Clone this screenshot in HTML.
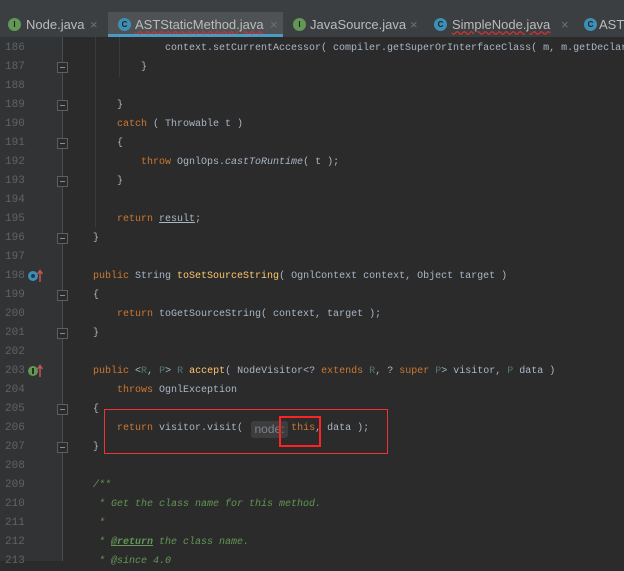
<!DOCTYPE html><html><head><style>
body{margin:0;width:624px;height:561px;overflow:hidden;background:#2b2b2b;font-family:"Liberation Mono",monospace;position:relative}
.top{position:absolute;left:0;top:0;width:624px;height:12px;background:#3c3f41}
.tabs{position:absolute;left:0;top:12px;width:624px;height:25px;background:#3c3f41}
.tab{position:absolute;top:0;height:25px;font:13px "Liberation Sans",sans-serif;color:#bbbbbb;line-height:25px;white-space:nowrap;overflow:hidden}
.tab .ic{position:absolute;top:6px;width:13px;height:13px;border-radius:50%;font:bold 8px "Liberation Sans";color:#222;text-align:center;line-height:13px}
.tab .x{color:#6f7274;font-size:13px;position:absolute}
.act{background:#4e5254;border-bottom:3px solid #4a9ac4;height:22px}
.gut{position:absolute;left:0;top:37px;width:62px;height:524px;background:#313335}
.ln{position:absolute;left:5px;width:20px;font-size:11px;color:#606366;height:19px;line-height:19px}
.code{position:absolute;left:93px;font-size:10px;color:#a9b7c6;white-space:pre;height:19px;line-height:19px}
.k{color:#cc7832}.f{color:#ffc66d}.c{color:#629755;font-style:italic}.i{font-style:italic}.tp{color:#507874}
.fold{position:absolute;left:57px;width:9px;height:9px;border:1px solid #5c5f61;background:#2b2b2b}
.fold:after{content:"";position:absolute;left:2px;top:4px;width:5px;height:1px;background:#8a8d8f}
.g{position:absolute;width:1px;background:#3b3b3b}
</style></head><body>
<div class="top"></div>
<div class="tabs">
<div class="tab" style="left:0;width:105px"><span class="ic" style="left:8px;background:#629755">I</span><span style="position:absolute;left:26px">Node.java</span><span class="x" style="left:90px">×</span></div>
<div class="tab act" style="left:108px;width:175px"><span class="ic" style="left:10px;background:#3d8fb5">C</span><span style="position:absolute;left:27px;text-decoration:underline wavy #c33">ASTStaticMethod.java</span><span class="x" style="left:162px">×</span></div>
<div class="tab" style="left:283px;width:142px"><span class="ic" style="left:10px;background:#629755">I</span><span style="position:absolute;left:27px">JavaSource.java</span><span class="x" style="left:127px">×</span></div>
<div class="tab" style="left:425px;width:150px"><span class="ic" style="left:9px;background:#3d8fb5">C</span><span style="position:absolute;left:27px;text-decoration:underline wavy #c33">SimpleNode.java</span><span class="x" style="left:136px">×</span></div>
<div class="tab" style="left:575px;width:60px"><span class="ic" style="left:9px;background:#3d8fb5">C</span><span style="position:absolute;left:24px">ASTE</span></div>
</div>
<div class="gut"></div>
<div style="position:absolute;left:62px;top:37px;width:1px;height:524px;background:#4a4d4f"></div>
<div class="g" style="left:95px;top:37px;height:190px"></div>
<div class="g" style="left:119px;top:37px;height:40px"></div>
<div id="L"></div>
<script>
var lines={186:'            context.setCurrentAccessor( compiler.getSuperOrInterfaceClass( m, m.getDeclar',
187:'        }',188:'',189:'    }',190:'    <span class=k>catch</span> ( Throwable t )',191:'    {',
192:'        <span class=k>throw</span> OgnlOps.<span class=i>castToRuntime</span>( t );',193:'    }',194:'',
195:'    <span class=k>return</span> <u>result</u>;',196:'}',197:'',
198:'<span class=k>public</span> String <span class=f>toSetSourceString</span>( OgnlContext context, Object target )',
199:'{',200:'    <span class=k>return</span> toGetSourceString( context, target );',201:'}',202:'',
203:'<span class=k>public</span> &lt;<span class=tp>R</span>, <span class=tp>P</span>&gt; <span class=tp>R</span> <span class=f>accept</span>( NodeVisitor&lt;? <span class=k>extends</span> <span class=tp>R</span>, ? <span class=k>super</span> <span class=tp>P</span>&gt; visitor, <span class=tp>P</span> data )',
204:'    <span class=k>throws</span> OgnlException',205:'{',
206:'    <span class=k>return</span> visitor.visit(        <span class=k>this</span>, data );',207:'}',208:'',
209:'<span class=c>/**</span>',210:'<span class=c> * Get the class name for this method.</span>',211:'<span class=c> *</span>',
212:'<span class=c> * <b><u>@return</u></b> the class name.</span>',213:'<span class=c> * @since 4.0</span>'};
var h='',folds=[187,189,191,193,196,199,201,205,207];
for(var n=186;n<=213;n++){var y=39+(n-186)*19;
h+='<div class=ln style="top:'+y+'px">'+n+'</div><div class=code style="top:'+y+'px">'+lines[n]+'</div>';
if(folds.indexOf(n)>=0)h+='<div class=fold style="top:'+(y+4)+'px"></div>';}
document.getElementById('L').innerHTML=h;
</script>
<svg style="position:absolute;left:26px;top:268px" width="20" height="120">
<circle cx="7" cy="8" r="5" fill="#3d8fb5"/><circle cx="7" cy="8" r="2" fill="#1b3d50"/>
<path d="M14 14V3M11.5 6L14 2.5L16.5 6" stroke="#c75450" stroke-width="1.5" fill="none"/>
<circle cx="7" cy="103" r="5" fill="#629755"/><rect x="6" y="100" width="2" height="6" fill="#1d331a"/>
<path d="M14 109V98M11.5 101L14 97.5L16.5 101" stroke="#c75450" stroke-width="1.5" fill="none"/>
</svg>
<div style="position:absolute;left:251px;top:421px;width:37px;height:17px;background:#3b3d3f;border-radius:3px;font:12px 'Liberation Sans',sans-serif;color:#7f8285;line-height:16px;text-align:center">node:</div>
<div style="position:absolute;left:104px;top:409px;width:282px;height:43px;border:1px solid #e33"></div>
<div style="position:absolute;left:279px;top:416px;width:38px;height:27px;border:2px solid #f22"></div>
</body></html>
